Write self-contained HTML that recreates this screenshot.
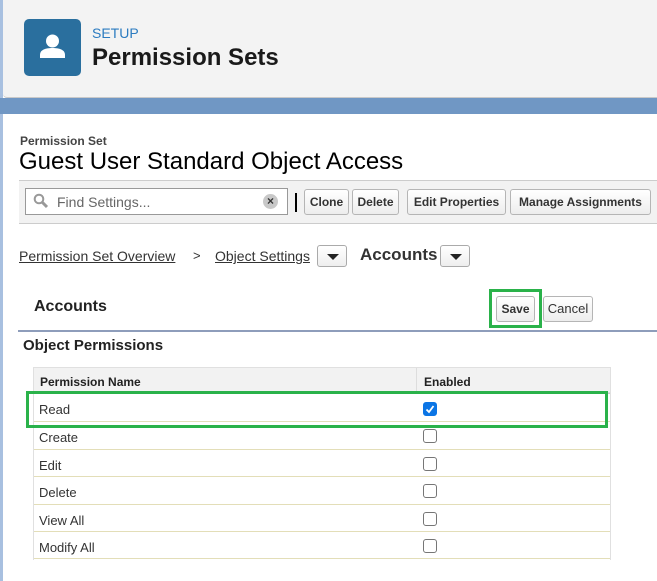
<!DOCTYPE html>
<html><head><style>
*{margin:0;padding:0;box-sizing:border-box}
body{width:657px;height:581px;position:relative;overflow:hidden;background:#fff;font-family:"Liberation Sans",Arial,sans-serif}
.a{position:absolute}
.btn{position:absolute;top:189px;height:26px;border:1px solid #b5b5b5;border-radius:3px;background:linear-gradient(#fff,#ededed);font-size:12px;font-weight:bold;color:#333;line-height:24px;text-align:center}
.dd{position:absolute;width:30px;height:22px;border:1px solid #aaa;border-radius:3px;background:linear-gradient(#fff,#eee)}
.dd:after{content:"";position:absolute;left:9px;top:8px;border-left:6px solid transparent;border-right:6px solid transparent;border-top:6px solid #222}
.row{position:absolute;left:33px;width:578px;height:27.5px;border-top:1px solid #e3deb8;font-size:13px;color:#333}
.row span{position:absolute;left:6px;top:8px}
.cb{position:absolute;left:390px;top:7px;width:14px;height:14px;border:1px solid #767676;border-radius:3px;background:#fff}
</style></head><body>
<div class="a" style="left:0;top:0;width:3px;height:581px;background:#a8c0e0"></div>
<div class="a" style="left:3px;top:0;width:654px;height:98px;background:#f3f3f3;border-bottom:1px solid #c9c9c9;border-radius:0 0 0 4px"></div>
<div class="a" style="left:0;top:98px;width:657px;height:16px;background:#7097c4"></div>
<div class="a" style="left:3px;top:114px;width:654px;height:467px;background:#fff;border-radius:4px 0 0 0"></div>
<div class="a" style="left:24px;top:19px;width:57px;height:57px;background:#2a6f9e;border-radius:5px">
<svg width="57" height="57" viewBox="0 0 57 57"><circle cx="28.5" cy="22" r="6.5" fill="#fff"/><path d="M16 36c0-5 5-7 12.5-7s12.5 2 12.5 7v3H16z" fill="#fff"/></svg></div>
<div class="a" style="left:92px;top:25px;font-size:14px;color:#2b7bc0">SETUP</div>
<div class="a" style="left:92px;top:44px;font-size:24px;font-weight:bold;color:#1a1a1a">Permission Sets</div>
<div class="a" style="left:20px;top:134px;font-size:12px;font-weight:bold;color:#444">Permission Set</div>
<div class="a" style="left:19px;top:148px;font-size:24px;color:#000">Guest User Standard Object Access</div>
<div class="a" style="left:19px;top:180px;width:638px;height:44px;background:#f2f2f2;border-top:1px solid #ccc;border-bottom:1px solid #ccc"></div>
<div class="a" style="left:25px;top:188px;width:263px;height:27px;border:1px solid #999;background:#fff"></div>
<svg class="a" style="left:33px;top:193px" width="16" height="16" viewBox="0 0 16 16"><circle cx="6" cy="6" r="4.3" fill="none" stroke="#999" stroke-width="2"/><path d="M9 9l5 5" stroke="#999" stroke-width="3"/></svg>
<div class="a" style="left:57px;top:194px;font-size:14px;color:#666">Find Settings...</div>
<div class="a" style="left:263px;top:194px;width:15px;height:15px;border-radius:50%;background:#c8c8c8;color:#333;font-size:12px;font-weight:bold;text-align:center;line-height:15px">×</div>
<div class="a" style="left:295px;top:193px;width:2px;height:19px;background:#000"></div>
<div class="btn" style="left:304px;width:45px">Clone</div>
<div class="btn" style="left:352px;width:47px">Delete</div>
<div class="btn" style="left:407px;width:99px">Edit Properties</div>
<div class="btn" style="left:510px;width:141px">Manage Assignments</div>
<div class="a" style="left:19px;top:248px;font-size:14px;color:#333;text-decoration:underline">Permission Set Overview</div>
<div class="a" style="left:193px;top:248px;font-size:13px;color:#333">&gt;</div>
<div class="a" style="left:215px;top:248px;font-size:14px;color:#333;text-decoration:underline">Object Settings</div>
<div class="dd" style="left:317px;top:245px"></div>
<div class="a" style="left:360px;top:245px;font-size:17px;font-weight:bold;color:#333">Accounts</div>
<div class="dd" style="left:440px;top:245px"></div>
<div class="a" style="left:34px;top:298px;font-size:16px;font-weight:bold;color:#222">Accounts</div>
<div class="a" style="left:489px;top:289px;width:53px;height:39px;border:3px solid #2ab24a"></div>
<div class="btn" style="top:296px;left:496px;width:39px;height:26px">Save</div>
<div class="btn" style="top:296px;left:543px;width:50px;height:26px;font-weight:normal;font-size:13px">Cancel</div>
<div class="a" style="left:18px;top:330px;width:639px;height:2px;background:#8e9dbb"></div>
<div class="a" style="left:23px;top:337px;font-size:15px;font-weight:bold;color:#222">Object Permissions</div>
<div class="a" style="left:33px;top:367px;width:578px;height:26px;background:#f2f2f2;border:1px solid #e0e0e0;font-size:12px;font-weight:bold;color:#222">
<span class="a" style="left:6px;top:7px">Permission Name</span>
<div class="a" style="left:382px;top:0;width:1px;height:25px;background:#ddd"></div>
<span class="a" style="left:390px;top:7px">Enabled</span></div>
<div class="row" style="top:393px;border-top:1px solid #ccc"><span>Read</span><div class="cb" style="background:#0b75e5;border-color:#0b75e5;top:8px"><svg width="12" height="12" viewBox="0 0 12 12" style="position:absolute;left:0;top:0"><path d="M2.5 6.5l2.5 2.5 4.5-6" fill="none" stroke="#fff" stroke-width="1.8"/></svg></div></div>
<div class="row" style="top:421px"><span>Create</span><div class="cb"></div></div>
<div class="row" style="top:449px"><span>Edit</span><div class="cb"></div></div>
<div class="row" style="top:476px"><span>Delete</span><div class="cb"></div></div>
<div class="row" style="top:504px"><span>View All</span><div class="cb"></div></div>
<div class="row" style="top:531px;border-bottom:1px solid #e3deb8"><span>Modify All</span><div class="cb"></div></div>
<div class="a" style="left:33px;top:367px;width:1px;height:193px;background:#e0e0e0"></div>
<div class="a" style="left:610px;top:367px;width:1px;height:193px;background:#e0e0e0"></div>
<div class="a" style="left:26px;top:391px;width:582px;height:37px;border:3px solid #2ab24a"></div>
</body></html>
